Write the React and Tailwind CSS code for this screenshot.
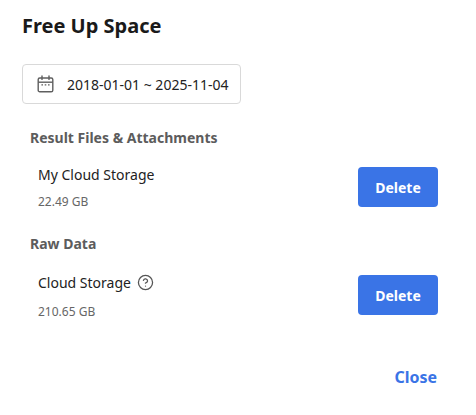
import React from 'react';
import { CircleHelp } from 'lucide-react';

const CalendarIcon = () => (
  <svg width="17" height="18" viewBox="0 0 17 18" fill="none" stroke="#5f5f5f" strokeWidth="1.4">
    <rect x="1.2" y="3" width="14.6" height="13.8" rx="1.6" />
    <path d="M1.2 7.2h14.6" />
    <path d="M5 1v3.4M12 1v3.4" strokeLinecap="round" />
    <path d="M4.4 9.8h1.6M7.7 9.8h1.6M11 9.8h1.6" strokeWidth="1.3" />
  </svg>
);

const Row = ({ title, size, help }) => (
  <div className="flex items-center justify-between px-[38px]">
    <div>
      <div className={`flex items-center gap-[6px] text-[14px] text-[#222] ${help ? 'h-[24px]' : 'h-[20px]'}`}>
        <span>{title}</span>
        {help && <CircleHelp size={17} strokeWidth={1.8} className="text-[#555]" />}
      </div>
      <div className="mt-[10px] text-[12px] leading-[16px] text-[#666]">{size}</div>
    </div>
    <button className="w-[80px] h-[40px] rounded bg-[#3a74e6] text-white text-[14px] font-bold">Delete</button>
  </div>
);

export default function App() {
  return (
    <div className="w-[476px] h-[415px] bg-white" style={{ fontFamily: '"Noto Sans", sans-serif' }}>
      <h1 className="pl-[22px] pt-[12px] text-[20px] leading-[28px] font-bold text-[#1a1a1a]">Free Up Space</h1>
      <div className="ml-[22px] mt-[24px] w-[219px] h-[40px] border border-[#d9d9d9] rounded flex items-center gap-[13px] pl-[14px] text-[14px] text-[#222]">
        <CalendarIcon />
        <span>2018-01-01 ~ 2025-11-04</span>
      </div>
      <div className="pl-[30px] mt-[24px] text-[14px] leading-[20px] font-bold text-[#5c5c5c]">Result Files &amp; Attachments</div>
      <div className="mt-[16px]"><Row title="My Cloud Storage" size="22.49 GB" /></div>
      <div className="pl-[30px] mt-[24px] text-[14px] leading-[20px] font-bold text-[#5c5c5c]">Raw Data</div>
      <div className="mt-[16px]"><Row title="Cloud Storage" size="210.65 GB" help /></div>
      <div className="flex justify-end pr-[39px] mt-[45px] text-[16px] leading-[24px] font-bold text-[#3a74e6]">Close</div>
    </div>
  );
}
